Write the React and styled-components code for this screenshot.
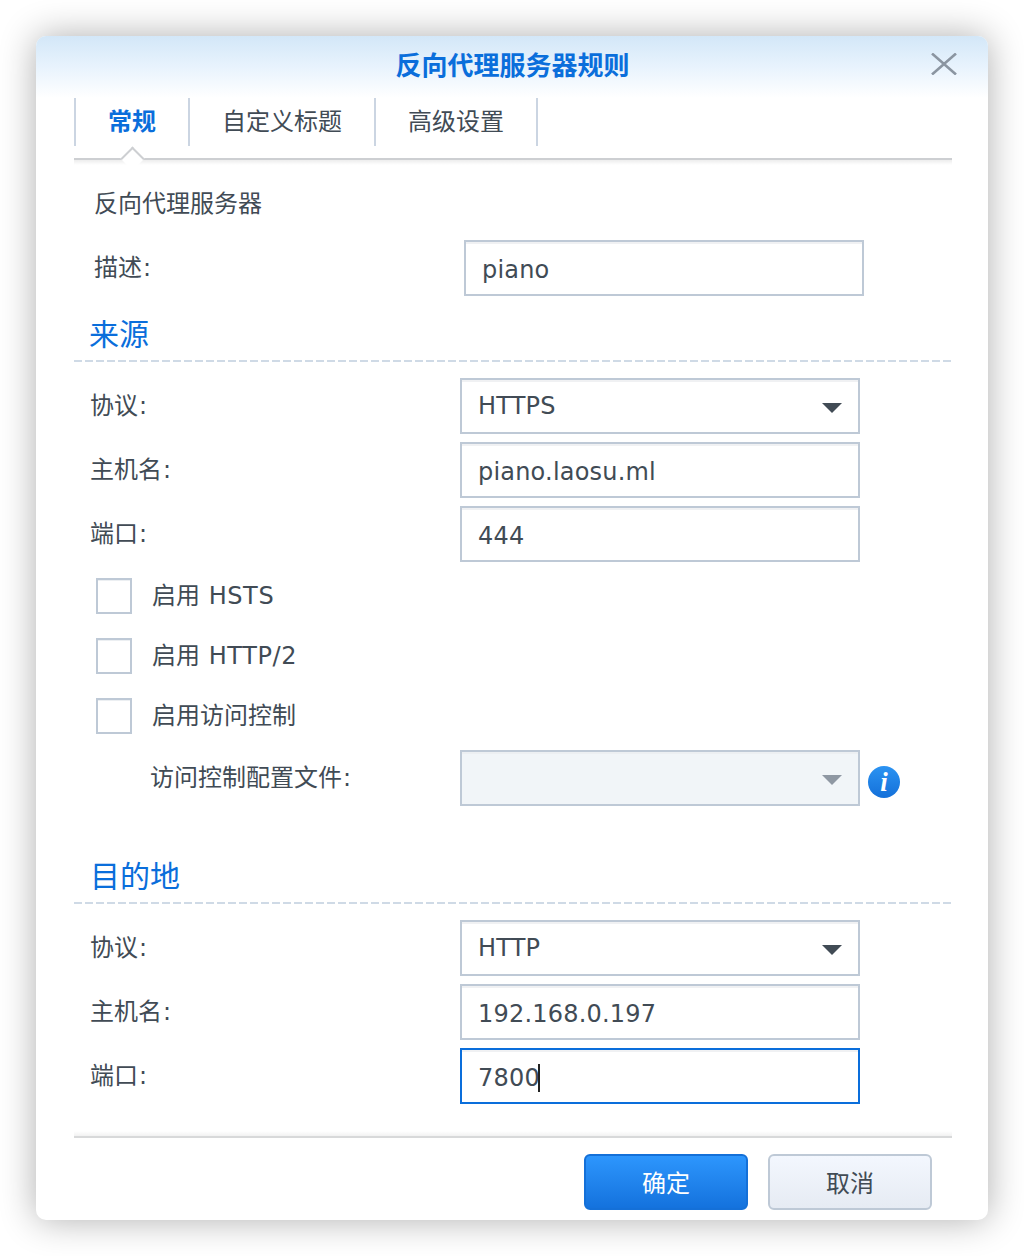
import React from "react";
import styled, { createGlobalStyle } from "styled-components";

const Global = createGlobalStyle`
  html, body { margin: 0; padding: 0; background: #fff; }
  * { box-sizing: border-box; }
  body { font-family: "DejaVu Sans", "Noto Sans CJK SC", sans-serif; font-size: 24px; color: #414b55; }
`;

const BLUE = "#0a6edb";

const Page = styled.div`
  width: 1024px;
  height: 1256px;
  padding: 36px;
`;
const Dialog = styled.div`
  width: 952px;
  height: 1184px;
  border-radius: 10px;
  background: #fff;
  box-shadow: 0 0 36px rgba(0, 0, 0, 0.32);
  display: flex;
  flex-direction: column;
  overflow: hidden;
`;
const Header = styled.header`
  height: 62px;
  flex: none;
  position: relative;
  display: flex;
  align-items: center;
  justify-content: center;
  padding: 0 0 2px 1px;
  background: linear-gradient(to bottom, #d3e7f8 0%, #e8f3fd 50%, #ffffff 100%);
`;
const Title = styled.h1`
  margin: 0;
  font-size: 26px;
  line-height: 36px;
  font-weight: 700;
  color: ${BLUE};
`;
const Close = styled.button`
  position: absolute;
  right: 30px;
  top: 16px;
  width: 28px;
  height: 24px;
  padding: 0;
  border: 0;
  background: none;
  display: flex;
  align-items: center;
  justify-content: center;
`;
const Body = styled.main`
  flex: 1;
  display: flex;
  flex-direction: column;
  padding: 0 36px 0 38px;
`;
const TabBar = styled.nav`
  position: relative;
  display: flex;
  height: 62px;
  flex: none;
  padding-bottom: 12px;
  border-bottom: 2px solid #cdcfd2;
  &::after {
    content: "";
    position: absolute;
    left: 0;
    right: 0;
    top: 100%;
    margin-top: 2px;
    height: 5px;
    background: linear-gradient(to bottom, rgba(0, 0, 0, 0.07), rgba(0, 0, 0, 0));
  }
`;
const Tab = styled.div`
  position: relative;
  height: 48px;
  padding: 0 32px;
  line-height: 48px;
  border-right: 2px solid #cbd5e2;
  font-weight: ${(p) => (p.$active ? 700 : 400)};
  color: ${(p) => (p.$active ? BLUE : "#414b55")};
  ${(p) => p.$active && "border-left: 2px solid #cbd5e2; width: 116px;"}
`;
const TabArrow = styled.span`
  position: absolute;
  z-index: 1;
  left: 47.5px;
  top: 51.5px;
  width: 17px;
  height: 17px;
  background: #fff;
  border-top: 2px solid #cdcfd2;
  border-left: 2px solid #cdcfd2;
  transform: rotate(45deg);
`;
const Intro = styled.div`
  margin-top: 28px;
  padding-left: 20px;
  height: 32px;
  line-height: 32px;
`;
const Rows = styled.div`
  display: flex;
  flex-direction: column;
  gap: 8px;
  margin-top: ${(p) => p.$top}px;
`;
const Row = styled.div`
  display: flex;
  align-items: center;
  height: 56px;
  padding-left: ${(p) => p.$indent || 16}px;
`;
const Label = styled.label`
  flex: none;
  width: 370px;
  line-height: 32px;
  padding-left: ${(p) => p.$inset || 0}px;
`;
const Colon = styled.span`
  margin-left: 1px;
`;
const Field = styled.div`
  position: relative;
  flex: none;
  width: 400px;
  height: 56px;
  padding: ${(p) => (p.$input ? "4px" : "0")} 16px 0;
  display: flex;
  align-items: center;
  line-height: 44px;
  letter-spacing: 0.2px;
  background: ${(p) => (p.$disabled ? "#f1f5f8" : "#fff")};
  border: 2px solid ${(p) => (p.$focus ? BLUE : "#bec9d6")};
  box-shadow: inset 0 2px 0 ${(p) => (p.$disabled ? "#eceff2" : "#f0f1f3")};
`;
const Caret = styled.span`
  width: 2px;
  height: 28px;
  margin-left: -2px;
  background: #222;
`;
const Arrow = styled.svg`
  position: absolute;
  right: 16px;
  top: 23px;
  width: 20px;
  height: 10px;
`;
const Info = styled.span`
  flex: none;
  width: 32px;
  height: 32px;
  margin: 8px 0 0 8px;
  border-radius: 50%;
  background: linear-gradient(to bottom, #2b93f2, #1470d9);
  color: #fff;
  font-family: "Liberation Serif", serif;
  font-style: italic;
  font-weight: 700;
  font-size: 27px;
  line-height: 32px;
  text-align: center;
`;
const SectionTitle = styled.h2`
  margin: ${(p) => p.$top}px 0 0;
  height: 48px;
  padding-left: ${(p) => p.$indent}px;
  font-size: 30px;
  line-height: 41px;
  font-weight: 400;
  color: ${BLUE};
  background: linear-gradient(to right, #cfdae6 8px, transparent 8px) left bottom / 11px 2px repeat-x;
`;
const Checks = styled.div`
  display: flex;
  flex-direction: column;
  gap: 24px;
  margin: 16px 0;
  padding-left: 22px;
`;
const CheckRow = styled.div`
  display: flex;
  align-items: center;
  gap: 20px;
  height: 36px;
`;
const Box = styled.span`
  flex: none;
  width: 36px;
  height: 36px;
  border: 2px solid #bec9d6;
  background: #fff;
  box-shadow: inset 0 1px 0 #eceff2;
`;
const CheckText = styled.span`
  line-height: 32px;
`;
const Latin = styled.span`
  margin-left: 1px;
  letter-spacing: 0.6px;
`;
const Footer = styled.footer`
  position: relative;
  display: flex;
  justify-content: flex-end;
  gap: 20px;
  margin-top: 32px;
  padding: 16px 20px 0 0;
  border-top: 2px solid #d8d9da;
  &::before {
    content: "";
    position: absolute;
    left: 0;
    right: 0;
    bottom: 100%;
    margin-bottom: 2px;
    height: 5px;
    background: linear-gradient(to top, rgba(0, 0, 0, 0.05), rgba(0, 0, 0, 0));
  }
`;
const Button = styled.button`
  width: 164px;
  height: 56px;
  padding: 4px 0 0;
  border-radius: 6px;
  font: inherit;
  line-height: 48px;
  color: ${(p) => (p.$primary ? "#fff" : "#414b55")};
  border: 2px solid ${(p) => (p.$primary ? "#1470d8" : "#bec9d6")};
  background: ${(p) =>
    p.$primary
      ? "linear-gradient(to bottom, #2d96fd, #1472dd)"
      : "linear-gradient(to bottom, #f3f7fe, #e6ebf3)"};
`;

const Triangle = ({ color = "#414b55" }) => (
  <Arrow viewBox="0 0 20 10">
    <polygon points="0,0 20,0 10,10" fill={color} />
  </Arrow>
);

const Endpoint = ({ protocol, host, port, focus }) => (
  <>
    <Row>
      <Label>协议<Colon>:</Colon></Label>
      <Field>
        {protocol}
        <Triangle />
      </Field>
    </Row>
    <Row>
      <Label>主机名<Colon>:</Colon></Label>
      <Field $input>{host}</Field>
    </Row>
    <Row>
      <Label>端口<Colon>:</Colon></Label>
      <Field $input $focus={focus}>
        {port}
        {focus && <Caret />}
      </Field>
    </Row>
  </>
);

export default function App() {
  return (
    <Page>
      <Global />
      <Dialog>
        <Header>
          <Title>反向代理服务器规则</Title>
          <Close aria-label="关闭">
            <svg width="26" height="22" viewBox="0 0 26 22">
              <path d="M1 0.5 L25 21.5 M25 0.5 L1 21.5" stroke="#8b95a1" strokeWidth="2.6" fill="none" />
            </svg>
          </Close>
        </Header>
        <Body>
          <TabBar>
            <Tab $active>
              常规
              <TabArrow />
            </Tab>
            <Tab>自定义标题</Tab>
            <Tab>高级设置</Tab>
          </TabBar>
          <Intro>反向代理服务器</Intro>
          <Rows $top={20}>
            <Row $indent={20}>
              <Label>描述<Colon>:</Colon></Label>
              <Field $input>piano</Field>
            </Row>
          </Rows>
          <SectionTitle $top={18} $indent={15}>来源</SectionTitle>
          <Rows $top={16}>
            <Endpoint protocol="HTTPS" host="piano.laosu.ml" port="444" />
          </Rows>
          <Checks>
            <CheckRow><Box /><CheckText>启用 <Latin>HSTS</Latin></CheckText></CheckRow>
            <CheckRow><Box /><CheckText>启用 <Latin>HTTP/2</Latin></CheckText></CheckRow>
            <CheckRow><Box /><CheckText>启用访问控制</CheckText></CheckRow>
          </Checks>
          <Row>
            <Label $inset={60}>访问控制配置文件<Colon>:</Colon></Label>
            <Field $disabled>
              <Triangle color="#8f98a3" />
            </Field>
            <Info>i</Info>
          </Row>
          <SectionTitle $top={50} $indent={16}>目的地</SectionTitle>
          <Rows $top={16}>
            <Endpoint protocol="HTTP" host="192.168.0.197" port="7800" focus />
          </Rows>
          <Footer>
            <Button $primary>确定</Button>
            <Button>取消</Button>
          </Footer>
        </Body>
      </Dialog>
    </Page>
  );
}
